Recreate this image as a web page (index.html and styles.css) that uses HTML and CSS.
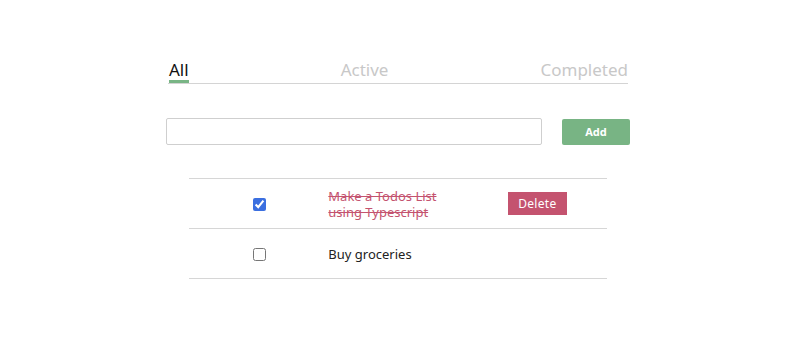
FILE: index.html
```html
<!DOCTYPE html>
<html lang="en">
<head>
<meta charset="utf-8">
<title>Todos</title>
<link rel="stylesheet" href="styles.css">
</head>
<body>
<div class="app">
  <nav class="tabs">
    <span class="tab tab-active">All</span>
    <span class="tab">Active</span>
    <span class="tab">Completed</span>
  </nav>
  <form class="add-form">
    <input class="add-input" type="text">
    <button class="add-btn" type="button">Add</button>
  </form>
  <div class="todo-list">
    <div class="todo-row">
      <div class="cell cell-check"><input type="checkbox" checked></div>
      <div class="cell cell-text"><span class="todo-text done">Make a Todos List using Typescript</span></div>
      <div class="cell cell-action"><button class="delete-btn" type="button">Delete</button></div>
    </div>
    <div class="todo-row">
      <div class="cell cell-check"><input type="checkbox"></div>
      <div class="cell cell-text"><span class="todo-text">Buy groceries</span></div>
      <div class="cell cell-action"></div>
    </div>
  </div>
</div>
</body>
</html>
```
FILE: styles.css
```css
body {
  margin: 0;
  background: #ffffff;
  font-family: "Noto Sans", "Open Sans", sans-serif;
}
.app {
  width: 464px;
  margin-left: 166px;
  padding-top: 60px;
}
.tabs {
  display: flex;
  justify-content: space-between;
  margin: 0 2px;
  border-bottom: 1px solid #d4d4d4;
}
.tab {
  font-size: 17px;
  line-height: 20px;
  color: #c8c8c8;
  border-bottom: 3px solid transparent;
}
.tab-active {
  color: #111111;
  border-bottom-color: #79b585;
  margin-left: 1px;
}
.add-form {
  display: flex;
  align-items: center;
  margin-top: 34px;
}
.add-input {
  box-sizing: border-box;
  width: 376px;
  height: 27px;
  border: 1px solid #cfcfcf;
  border-radius: 2px;
  padding: 0 6px;
  margin: 0;
}
.add-btn {
  box-sizing: border-box;
  margin-left: auto;
  width: 68px;
  height: 26px;
  border: none;
  border-radius: 2px;
  background: #78b484;
  color: #ffffff;
  font-family: inherit;
  font-size: 11px;
  font-weight: 700;
}
.todo-list {
  margin: 33px 23px 0;
  border-bottom: 1px solid #d6d6d6;
}
.todo-row {
  display: grid;
  grid-template-columns: 1fr 1fr 1fr;
  align-items: center;
  height: 49px;
  border-top: 1px solid #d6d6d6;
}
.cell-check {
  display: flex;
  justify-content: center;
  padding: 2px 0 0 1px;
}
.cell-check input {
  margin: 0;
  width: 13px;
  height: 13px;
  accent-color: #3b6fe0;
}
.cell-action {
  display: flex;
  justify-content: center;
}
.todo-text {
  display: block;
  font-size: 13px;
  line-height: 16px;
  color: #222222;
  max-width: 125px;
}
.todo-text.done {
  color: #c4536f;
  text-decoration: line-through;
}
.delete-btn {
  box-sizing: border-box;
  width: 59px;
  height: 23px;
  border: none;
  background: #c4536f;
  color: #ffffff;
  font-family: inherit;
  font-size: 12px;
  letter-spacing: 0.3px;
  padding: 0;
}
```
